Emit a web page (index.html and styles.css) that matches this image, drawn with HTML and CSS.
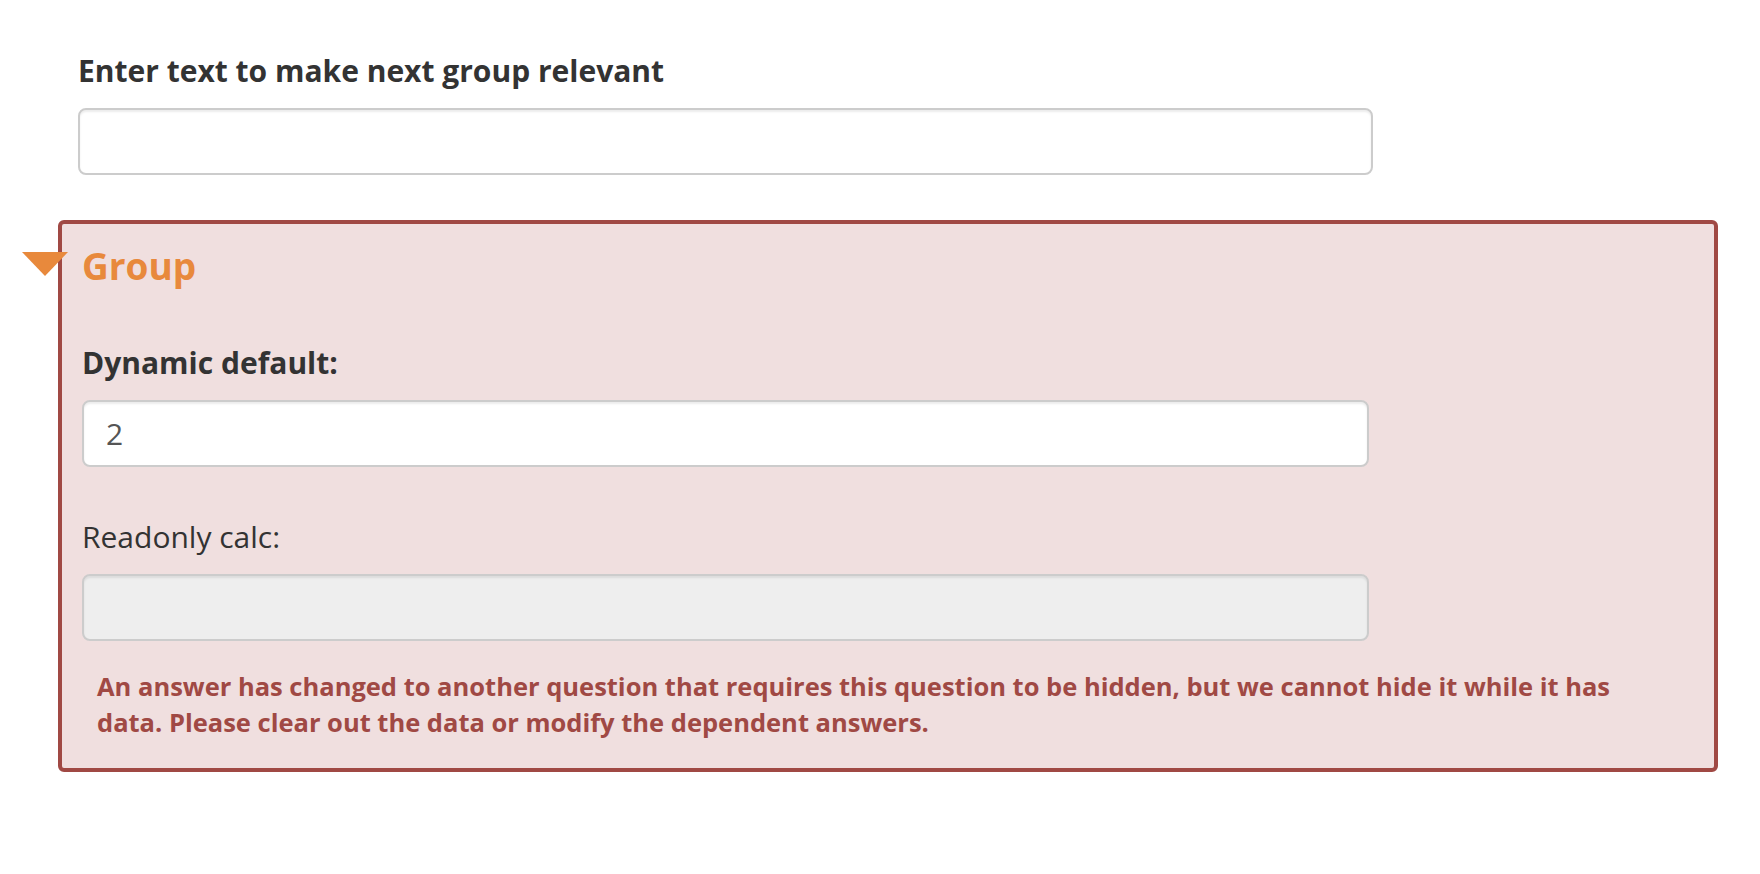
FILE: index.html
```html
<!DOCTYPE html>
<html lang="en">
<head>
<meta charset="utf-8">
<title>Group relevance</title>
<link rel="stylesheet" href="styles.css">
</head>
<body>
<div class="form">
  <div class="question question-top">
    <label class="q-label q-label-bold" for="q1">Enter text to make next group relevant</label>
    <input class="q-input q-input-wide" id="q1" type="text">
  </div>
  <section class="group">
    <h3 class="group-title"><span class="caret"></span>Group</h3>
    <div class="question question-spaced">
      <label class="q-label q-label-bold" for="q2">Dynamic default:</label>
      <input class="q-input" id="q2" type="text" value="2">
    </div>
    <div class="question">
      <label class="q-label" for="q3">Readonly calc:</label>
      <input class="q-input q-input-readonly" id="q3" type="text" readonly>
    </div>
    <div class="error-msg">An answer has changed to another question that requires this question to be hidden, but we cannot hide it while it has data. Please clear out the data or modify the dependent answers.</div>
  </section>
</div>
</body>
</html>
```

FILE: styles.css
```css
html, body {
  margin: 0;
  padding: 0;
  background: #ffffff;
}

body {
  font-family: "Open Sans", "Liberation Sans", sans-serif;
  color: #333333;
}

.form {
  padding: 49px 0 0 78px;
}

.question {
  display: flex;
  flex-direction: column;
  align-items: flex-start;
}

.question-spaced {
  margin-bottom: 48px;
}

.q-label {
  display: block;
  font-size: 30px;
  line-height: 43px;
  font-weight: 400;
  color: #333333;
  margin: 0 0 16px 0;
}

.q-label-bold {
  font-weight: 700;
}

.q-input {
  box-sizing: border-box;
  width: 1287px;
  height: 67px;
  margin: 0;
  padding: 0 22px;
  border: 2px solid #cccccc;
  border-radius: 8px;
  background: #ffffff;
  box-shadow: inset 0 2px 2px rgba(0, 0, 0, 0.075);
  font-family: "Open Sans", "Liberation Sans", sans-serif;
  font-size: 30px;
  color: #555555;
  outline: none;
}

.q-input-wide {
  width: 1295px;
}

.q-input-readonly {
  background: #eeeeee;
}

.group {
  position: relative;
  box-sizing: border-box;
  width: 1660px;
  margin: 45px 0 0 -20px;
  padding: 20px 20px 28px 20px;
  border: 4px solid #a04944;
  border-radius: 6px;
  background: #f0dfdf;
}

.group-title {
  position: relative;
  margin: 0 0 53px 0;
  font-size: 37px;
  line-height: 44px;
  font-weight: 700;
  color: #e8893c;
}

.caret {
  position: absolute;
  left: -60px;
  top: 8px;
  width: 0;
  height: 0;
  border-left: 23.5px solid transparent;
  border-right: 23.5px solid transparent;
  border-top: 24px solid #e8893c;
}

.error-msg {
  max-width: 1545px;
  margin-top: 27px;
  padding: 0 15px;
  font-size: 25.5px;
  line-height: 36px;
  font-weight: 700;
  color: #a04944;
}
```
